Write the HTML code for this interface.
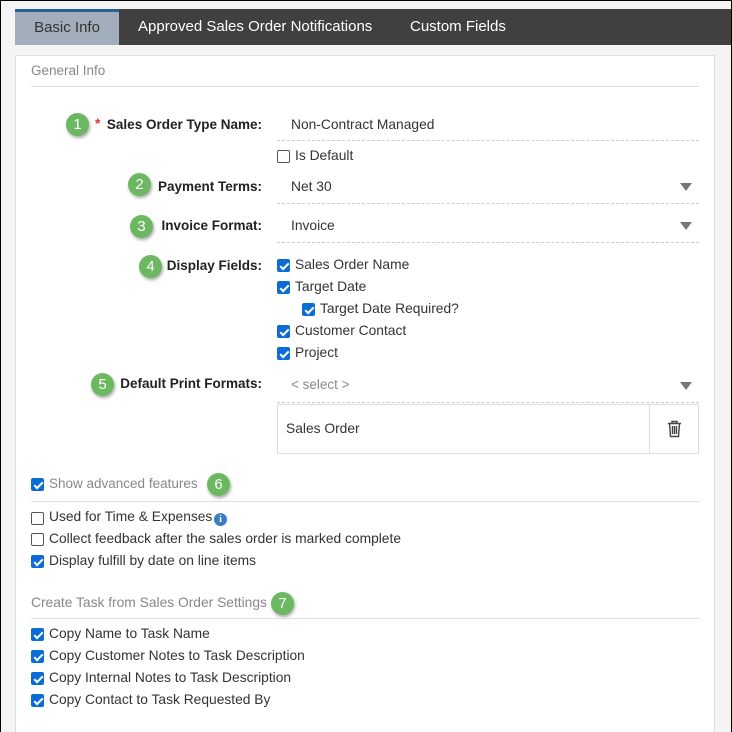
<!DOCTYPE html>
<html style="overflow:hidden"><head><style>
*{margin:0;padding:0;box-sizing:border-box}
html,body{width:732px;height:732px;overflow:hidden}
body{background:#f4f4f4;font-family:"Liberation Sans",sans-serif;font-size:13.8px;color:#333;position:relative}
.frame{position:absolute;left:0;top:0;width:732px;height:732px;border:1px solid #000;border-bottom:none}
.a{position:absolute;white-space:nowrap}
.tabs{position:absolute;left:15px;top:9px;width:716px;height:36px;background:#404040}
.tab{position:absolute;top:0;height:36px;line-height:36px;color:#fff;font-size:15px}
.panel{position:absolute;left:15px;top:55px;width:700px;height:677px;background:#fff;border:1px solid #ddd;border-bottom:none}
.hr{position:absolute;height:1px;background:#ddd}
.dash{position:absolute;height:0;border-top:1px dashed #ccc}
.lbl{position:absolute;font-weight:bold;color:#222;text-align:right;right:470px;white-space:nowrap;font-size:13.5px}
.cb{position:absolute;width:13px;height:13px;border:1px solid #555;border-radius:2px;background:#fff}
.cb.on{background:#0b6cd6;border-color:#0b6cd6}
.cb.on::after{content:"";position:absolute;left:3.5px;top:0.5px;width:3px;height:7px;border:solid #fff;border-width:0 2px 2px 0;transform:rotate(45deg)}
.num{position:absolute;width:23px;height:23px;border-radius:50%;background:#6cb861;color:#fff;font-size:15px;text-align:center;line-height:23px;box-shadow:1px 2px 3px rgba(0,0,0,.35)}
.tri{position:absolute;width:0;height:0;border-left:6px solid transparent;border-right:6px solid transparent;border-top:8px solid #777}
.gray{color:#888}
</style></head><body>
<div class="frame"></div>
<div class="tabs">
<div class="tab" style="left:0;width:104px;background:#a3aebc;color:#333;border-top:3px solid #2a5f95;line-height:32px;text-align:center">Basic Info</div>
<div class="tab" style="left:123px">Approved Sales Order Notifications</div>
<div class="tab" style="left:395px">Custom Fields</div>
</div>
<div class="panel"></div>
<div class="a gray" style="left:31px;top:63px;font-size:13.5px">General Info</div>
<div class="hr" style="left:31px;top:86px;width:668px"></div>

<div class="num" style="left:66px;top:113px">1</div>
<div class="a" style="left:95px;top:116px;color:#d33;font-weight:bold">*</div>
<div class="lbl" style="top:117px">Sales Order Type Name:</div>
<div class="a" style="left:291px;top:117px">Non-Contract Managed</div>
<div class="dash" style="left:277px;top:140px;width:422px"></div>
<div class="cb" style="left:277px;top:150px"></div>
<div class="a" style="left:295px;top:148px">Is Default</div>

<div class="num" style="left:128px;top:173px">2</div>
<div class="lbl" style="top:179px">Payment Terms:</div>
<div class="a" style="left:291px;top:179px">Net 30</div>
<div class="tri" style="left:680px;top:183px"></div>
<div class="dash" style="left:277px;top:203px;width:422px"></div>

<div class="num" style="left:130px;top:215px">3</div>
<div class="lbl" style="top:218px">Invoice Format:</div>
<div class="a" style="left:291px;top:218px">Invoice</div>
<div class="tri" style="left:680px;top:222px"></div>
<div class="dash" style="left:277px;top:242px;width:422px"></div>

<div class="num" style="left:139px;top:255px">4</div>
<div class="lbl" style="top:258px">Display Fields:</div>
<div class="cb on" style="left:277px;top:259px"></div><div class="a" style="left:295px;top:257px">Sales Order Name</div>
<div class="cb on" style="left:277px;top:281px"></div><div class="a" style="left:295px;top:279px">Target Date</div>
<div class="cb on" style="left:302px;top:303px"></div><div class="a" style="left:320px;top:301px">Target Date Required?</div>
<div class="cb on" style="left:277px;top:325px"></div><div class="a" style="left:295px;top:323px">Customer Contact</div>
<div class="cb on" style="left:277px;top:347px"></div><div class="a" style="left:295px;top:345px">Project</div>

<div class="num" style="left:91px;top:373px">5</div>
<div class="lbl" style="top:376px">Default Print Formats:</div>
<div class="a gray" style="left:291px;top:377px;font-size:13.5px">&lt; select &gt;</div>
<div class="tri" style="left:680px;top:382px"></div>
<div class="dash" style="left:277px;top:402px;width:422px"></div>
<div class="a" style="left:277px;top:404px;width:422px;height:50px;border:1px solid #ddd"></div>
<div class="a" style="left:649px;top:404px;width:1px;height:50px;background:#ddd"></div>
<div class="a" style="left:286px;top:421px">Sales Order</div>
<svg class="a" style="left:667px;top:420px" width="15" height="18" viewBox="0 0 15 18" fill="none" stroke="#444" stroke-width="1.4"><path d="M1 3.5h13M5 3.5V1.5h5v2M2.5 3.5l1 13h8l1-13M5.5 6v8M7.5 6v8M9.5 6v8"/></svg>

<div class="cb on" style="left:31px;top:478px"></div>
<div class="a gray" style="left:49px;top:476px;font-size:13.5px">Show advanced features</div>
<div class="num" style="left:207px;top:473px">6</div>
<div class="hr" style="left:31px;top:501px;width:668px"></div>
<div class="cb" style="left:31px;top:512px"></div><div class="a" style="left:49px;top:509px">Used for Time &amp; Expenses</div>
<div class="a" style="left:214px;top:513px;width:13px;height:13px;border-radius:50%;background:#3b7dc4;color:#fff;font-size:10px;font-weight:bold;text-align:center;line-height:13px;font-family:'Liberation Serif',serif">i</div>
<div class="cb" style="left:31px;top:533px"></div><div class="a" style="left:49px;top:531px">Collect feedback after the sales order is marked complete</div>
<div class="cb on" style="left:31px;top:555px"></div><div class="a" style="left:49px;top:553px">Display fulfill by date on line items</div>

<div class="a gray" style="left:31px;top:595px;font-size:13.8px">Create Task from Sales Order Settings</div>
<div class="num" style="left:271px;top:592px">7</div>
<div class="hr" style="left:31px;top:618px;width:668px"></div>
<div class="cb on" style="left:31px;top:628px"></div><div class="a" style="left:49px;top:626px">Copy Name to Task Name</div>
<div class="cb on" style="left:31px;top:650px"></div><div class="a" style="left:49px;top:648px">Copy Customer Notes to Task Description</div>
<div class="cb on" style="left:31px;top:672px"></div><div class="a" style="left:49px;top:670px">Copy Internal Notes to Task Description</div>
<div class="cb on" style="left:31px;top:694px"></div><div class="a" style="left:49px;top:692px">Copy Contact to Task Requested By</div>
</body></html>
